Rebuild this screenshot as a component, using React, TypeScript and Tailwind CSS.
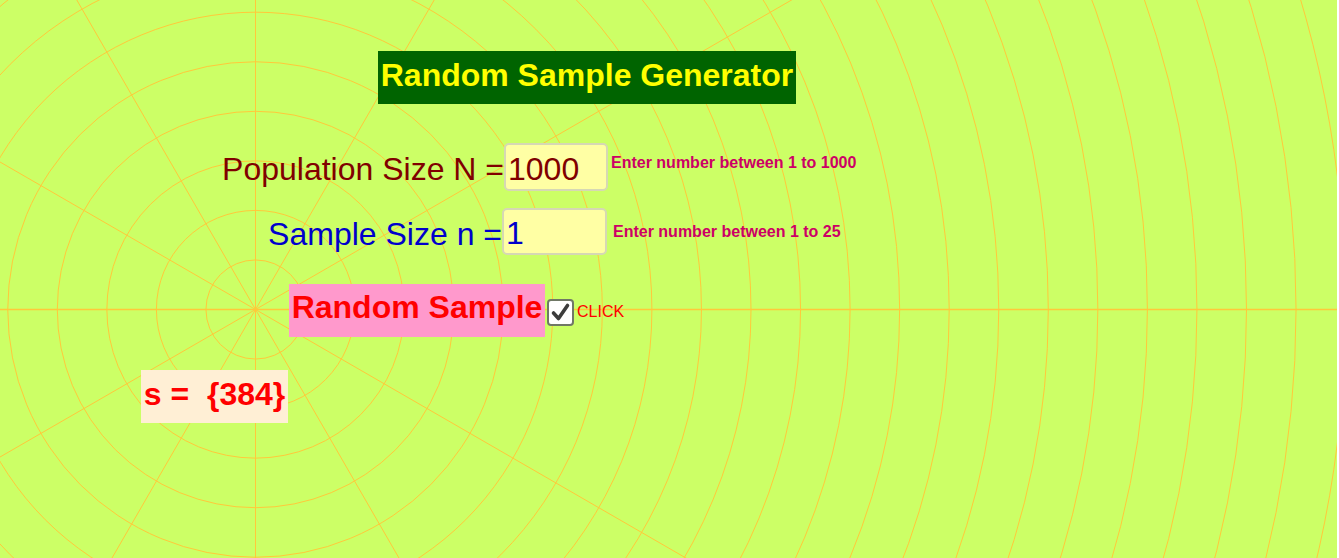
import React from "react";

// polar grid drawn behind the applet widgets
const CX = 255.5;
const CY = 309.5;
const STEP = 49.55;

function PolarGrid() {
  const rings = Array.from({ length: 24 }, (_, i) => (i + 1) * STEP);
  const angles = [0, 30, 60, 90, 120, 150];
  return (
    <svg className="absolute inset-0" width="1337" height="558" viewBox="0 0 1337 558">
      {rings.map((r) => (
        <circle key={r} cx={CX} cy={CY} r={r} fill="none" stroke="#ffc93a" strokeWidth="1" />
      ))}
      {angles.map((a) => {
        const rad = (a * Math.PI) / 180;
        const dx = Math.cos(rad) * 2000;
        const dy = Math.sin(rad) * 2000;
        return (
          <line
            key={a}
            x1={CX - dx}
            y1={CY - dy}
            x2={CX + dx}
            y2={CY + dy}
            stroke="#ffc83a"
            strokeWidth={a === 0 ? 1.6 : 1}
          />
        );
      })}
    </svg>
  );
}

function InputBox({ value, color, width }: { value: string; color: string; width: string }) {
  return (
    <div
      className={`${width} flex items-center pl-[2px] pt-[3px] bg-[#ffffa4] border-2 border-[#d6d8b4] rounded-[5px] text-[32px] leading-none ${color}`}
    >
      {value}
    </div>
  );
}

export default function App() {
  return (
    <div className="min-h-[558px] bg-white">
      <div className="relative w-[1337px] h-[558px] overflow-hidden bg-[#ccff66] font-['Liberation_Sans',Arial,sans-serif]">
        <PolarGrid />

        <div className="relative flex flex-col">
          {/* title */}
          <div className="ml-[378px] mt-[51px] w-[418px] h-[53px] pb-[6px] flex items-center justify-center bg-[#006400] text-[#ffff00] text-[32px] font-bold">
            Random Sample Generator
          </div>

          {/* population size */}
          <div className="mt-[39px] flex items-center h-[48px]">
            <div className="w-[504px] mt-[4px] text-right text-[32px] text-[#800000]">Population Size N =</div>
            <InputBox value="1000" color="text-[#800000]" width="w-[104px] h-[48px]" />
            <div className="ml-[3px] mb-[8px] text-[16px] font-bold text-[#cc0066]">Enter number between 1 to 1000</div>
          </div>

          {/* sample size */}
          <div className="mt-[17px] flex items-center h-[47px]">
            <div className="w-[502px] mt-[4px] text-right text-[32px] text-[#0000cc]">Sample Size n =</div>
            <InputBox value="1" color="text-[#0000cc]" width="w-[105px] h-[47px]" />
            <div className="ml-[6px] text-[16px] font-bold text-[#cc0066]">Enter number between 1 to 25</div>
          </div>

          {/* button + checkbox */}
          <div className="mt-[29px] ml-[289px] flex items-center">
            <div className="w-[256px] h-[53px] pb-[7px] flex items-center justify-center bg-[#ff99cc] text-[32px] font-bold text-[#ff0000]">
              Random Sample
            </div>
            <div className="ml-[2px] mt-[3px] w-[27px] h-[27px] flex items-center justify-center bg-white border-2 border-[#707866] rounded-[4px]">
              <svg width="21" height="21" viewBox="0 0 21 21">
                <path d="M3.5 11 L8.5 16.5 L17.5 3.5" fill="none" stroke="#3c3c3c" strokeWidth="3.6" strokeLinecap="round" strokeLinejoin="round" />
              </svg>
            </div>
            <div className="ml-[3px] mt-[3px] text-[16px] text-[#ff0000]">CLICK</div>
          </div>

          {/* result */}
          <div className="mt-[33px] ml-[141px] w-[147px] h-[53px] pb-[5px] flex items-center justify-center bg-[#ffefd5] text-[32px] font-bold text-[#ff0000] whitespace-pre">
            {"s =  {384}"}
          </div>
        </div>
      </div>
    </div>
  );
}
